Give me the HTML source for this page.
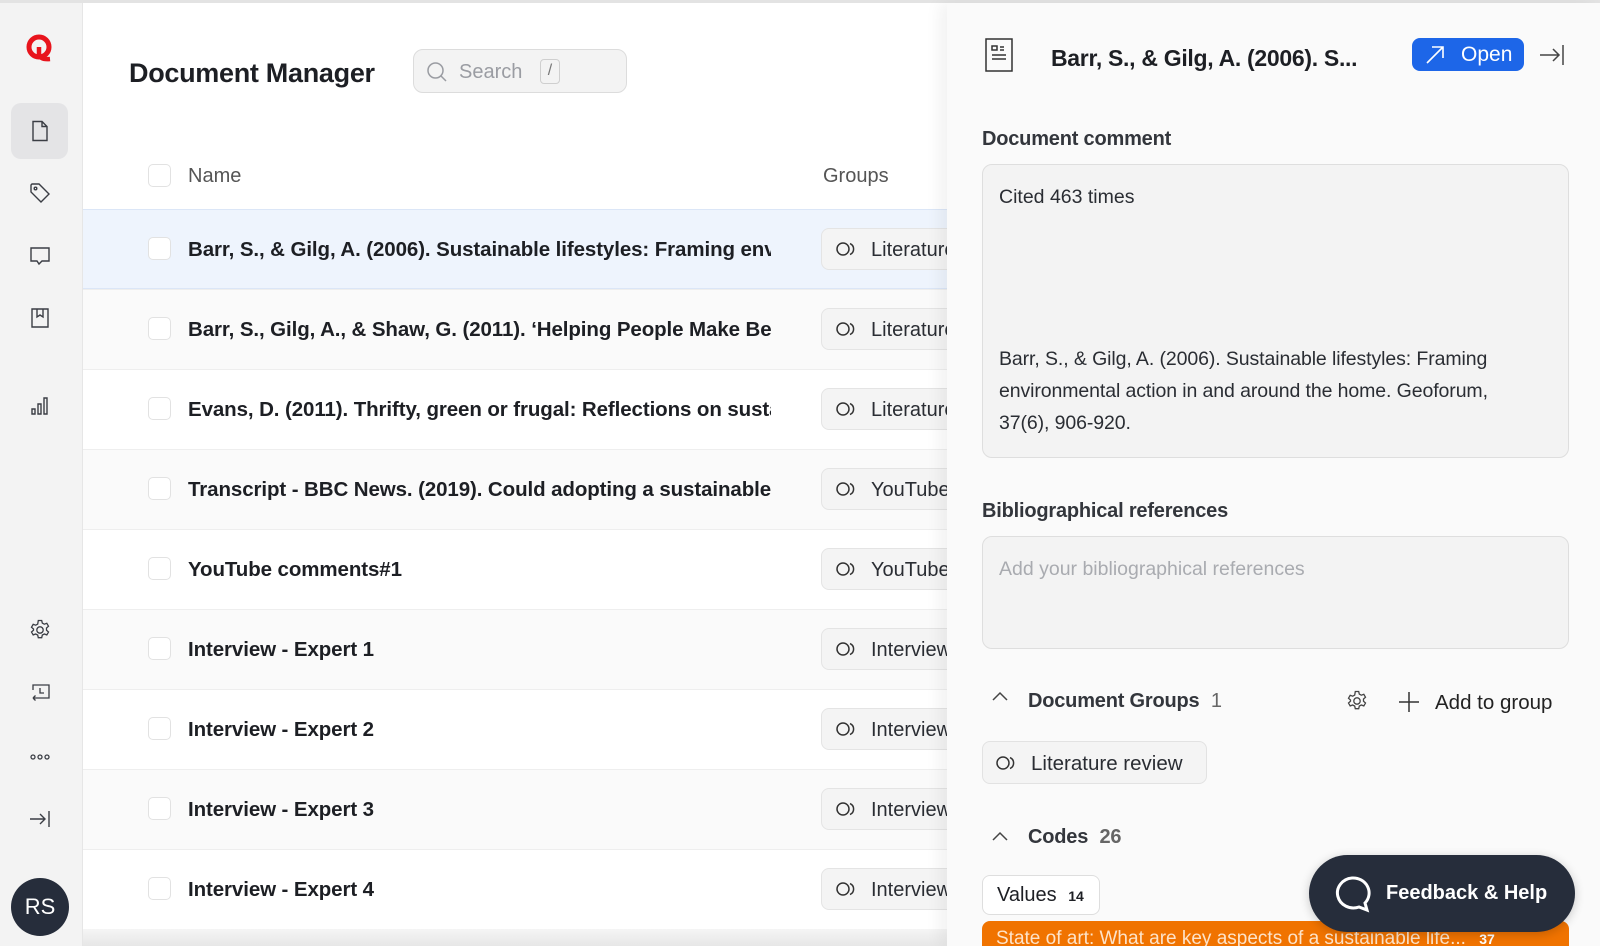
<!DOCTYPE html>
<html style="overflow:hidden;width:1600px;height:946px"><head><meta charset="utf-8"><style>
*{box-sizing:border-box;margin:0;padding:0}
body{width:1600px;height:946px;overflow:hidden;background:#fff;font-family:"Liberation Sans",sans-serif;color:#1d1f24;position:relative}
.abs{position:absolute}
.top{left:0;top:0;width:1600px;height:3px;background:#e3e3e3}
.side{left:0;top:3px;width:83px;height:943px;background:#f3f3f3;border-right:1px solid #e6e6e6}
.ic{position:absolute;left:28px;width:24px;height:24px}
.main{left:83px;top:3px;width:864px;height:943px;background:#fff;overflow:hidden}
.row{position:absolute;left:0;width:864px;height:80px;border-top:1px solid #eee}
.cb{position:absolute;left:65px;width:23px;height:23px;border:1.5px solid #e2e2e2;border-radius:5px;background:#fff}
.rt{position:absolute;left:105px;width:583px;overflow:hidden;white-space:nowrap;font-weight:bold;font-size:20.5px;letter-spacing:-0.1px}
.chip{position:absolute;left:738px;width:200px;height:42px;border:1px solid #e4e4e4;border-radius:8px;background:#f4f4f4;font-size:20px;color:#2a2d33;padding:10px 0 0 49px}
.chip svg{position:absolute;left:14px;top:13px}
.panel{left:947px;top:3px;width:653px;height:943px;background:#fafafa;box-shadow:-8px 0 14px rgba(0,0,0,0.05);overflow:hidden}
.h{font-size:20px;font-weight:bold;color:#33363c;letter-spacing:-0.2px}
.box{position:absolute;background:#f3f3f3;border:1.5px solid #dedede;border-radius:10px}
</style></head><body>
<div class="abs top"></div>
<div class="abs side">
<svg class="abs" style="left:25px;top:31px" width="30" height="32" viewBox="0 0 30 32"><circle cx="14" cy="13" r="10" fill="none" stroke="#e8141c" stroke-width="5"/><path d="M14 13 L14 20 Q15 26 25 25" fill="none" stroke="#e8141c" stroke-width="4.5"/></svg>
<div class="abs" style="left:11px;top:100px;width:57px;height:56px;background:#e4e4e6;border-radius:10px"></div>
<svg class="ic" style="top:116px" viewBox="0 0 24 24" fill="none" stroke="#3a3d44" stroke-width="1.4"><path d="M5 2.5h9l5 5v14H5z M14 2.5v5h5"/></svg>
<svg class="ic" style="top:178px" viewBox="0 0 24 24" fill="none" stroke="#3a3d44" stroke-width="1.4"><path d="M3 4v7l10 10 8-8L11 3H4z"/><circle cx="7.5" cy="7.5" r="1.3"/></svg>
<svg class="ic" style="top:241px" viewBox="0 0 24 24" fill="none" stroke="#3a3d44" stroke-width="1.4"><path d="M3 4h18v13h-7l-3 3-2-3H3z"/></svg>
<svg class="ic" style="top:303px" viewBox="0 0 24 24" fill="none" stroke="#3a3d44" stroke-width="1.4"><path d="M4 3h16v18H4z M9 3v8l3-2 3 2V3"/></svg>
<svg class="ic" style="top:391px" viewBox="0 0 24 24" fill="none" stroke="#3a3d44" stroke-width="1.4"><path d="M4 15h3v5H4z M10 10h3v10h-3z M16 4h3v16h-3z"/></svg>
<svg class="ic" style="top:615px" viewBox="0 0 24 24" fill="none" stroke="#3a3d44" stroke-width="1.3"><circle cx="12" cy="12" r="3.2"/><path d="M10.3 2.5h3.4l.6 2.6 2 1.1 2.5-.9 1.7 2.9-2 1.8v2.2l2 1.8-1.7 2.9-2.5-.9-2 1.1-.6 2.6h-3.4l-.6-2.6-2-1.1-2.5.9-1.7-2.9 2-1.8V11l-2-1.8 1.7-2.9 2.5.9 2-1.1z"/></svg>
<svg class="ic" style="top:678px" viewBox="0 0 24 24" fill="none" stroke="#3a3d44" stroke-width="1.3"><path d="M5 9V4h16v13H5 M5 17l2.5-2.5 M5 17l2.5 2.5 M12 7v5h4"/></svg>
<svg class="ic" style="top:741px" viewBox="0 0 24 24" fill="none" stroke="#3a3d44" stroke-width="1.3"><circle cx="5" cy="13" r="2"/><circle cx="12" cy="13" r="2"/><circle cx="19" cy="13" r="2"/></svg>
<svg class="ic" style="top:804px" viewBox="0 0 24 24" fill="none" stroke="#3a3d44" stroke-width="1.4"><path d="M2 12h15 M12 7l5 5-5 5 M21 4v16"/></svg>
<div class="abs" style="left:11px;top:875px;width:58px;height:58px;border-radius:50%;background:#262d3b;color:#fff;font-size:22px;text-align:center;line-height:58px">RS</div>
</div>
<div class="abs main">
<div class="abs" style="left:46px;top:55px;font-size:27px;font-weight:bold;color:#1d1f24;letter-spacing:-0.3px">Document Manager</div>
<div class="abs" style="left:330px;top:46px;width:214px;height:44px;border:1.5px solid #dcdcdc;border-radius:10px;background:#f3f3f3">
<svg class="abs" style="left:11px;top:10px" width="24" height="24" viewBox="0 0 24 24" fill="none" stroke="#9a9ca2" stroke-width="1.5"><circle cx="10.5" cy="10.5" r="7.5"/><path d="M16 16l5 5"/></svg>
<div class="abs" style="left:45px;top:11px;font-size:20px;color:#9a9ca2">Search</div>
<div class="abs" style="left:126px;top:9px;width:20px;height:25px;border:1.5px solid #cfcfcf;border-radius:4px;font-size:16px;color:#777;text-align:center;line-height:22px">/</div>
</div>
<div class="cb" style="top:161px"></div>
<div class="abs" style="left:105px;top:162px;font-size:20px;color:#555">Name</div>
<div class="abs" style="left:740px;top:162px;font-size:20px;color:#555">Groups</div>
<div class="row" style="top:206px;background:#eef4fd;border-top:1px solid #dbe6f7;border-bottom:1px solid #dbe6f7"><div class="cb" style="top:27px"></div><div class="rt" style="top:28px">Barr, S., &amp; Gilg, A. (2006). Sustainable lifestyles: Framing environmental action</div><div class="chip" style="top:18px"><svg width="22" height="14" viewBox="0 0 22 14" fill="none" stroke="#333" stroke-width="1.5"><circle cx="7" cy="7" r="6"/><path d="M14 1.5a6 6 0 0 1 0 11"/></svg>Literature review</div></div>
<div class="row" style="top:286px;background:#fafafa"><div class="cb" style="top:27px"></div><div class="rt" style="top:28px">Barr, S., Gilg, A., &amp; Shaw, G. (2011). ‘Helping People Make Better Choices’</div><div class="chip" style="top:18px"><svg width="22" height="14" viewBox="0 0 22 14" fill="none" stroke="#333" stroke-width="1.5"><circle cx="7" cy="7" r="6"/><path d="M14 1.5a6 6 0 0 1 0 11"/></svg>Literature review</div></div>
<div class="row" style="top:366px;background:#fff"><div class="cb" style="top:27px"></div><div class="rt" style="top:28px">Evans, D. (2011). Thrifty, green or frugal: Reflections on sustainable consumption</div><div class="chip" style="top:18px"><svg width="22" height="14" viewBox="0 0 22 14" fill="none" stroke="#333" stroke-width="1.5"><circle cx="7" cy="7" r="6"/><path d="M14 1.5a6 6 0 0 1 0 11"/></svg>Literature review</div></div>
<div class="row" style="top:446px;background:#fafafa"><div class="cb" style="top:27px"></div><div class="rt" style="top:28px">Transcript - BBC News. (2019). Could adopting a sustainable lifestyle</div><div class="chip" style="top:18px"><svg width="22" height="14" viewBox="0 0 22 14" fill="none" stroke="#333" stroke-width="1.5"><circle cx="7" cy="7" r="6"/><path d="M14 1.5a6 6 0 0 1 0 11"/></svg>YouTube</div></div>
<div class="row" style="top:526px;background:#fff"><div class="cb" style="top:27px"></div><div class="rt" style="top:28px">YouTube comments#1</div><div class="chip" style="top:18px"><svg width="22" height="14" viewBox="0 0 22 14" fill="none" stroke="#333" stroke-width="1.5"><circle cx="7" cy="7" r="6"/><path d="M14 1.5a6 6 0 0 1 0 11"/></svg>YouTube</div></div>
<div class="row" style="top:606px;background:#fafafa"><div class="cb" style="top:27px"></div><div class="rt" style="top:28px">Interview - Expert 1</div><div class="chip" style="top:18px"><svg width="22" height="14" viewBox="0 0 22 14" fill="none" stroke="#333" stroke-width="1.5"><circle cx="7" cy="7" r="6"/><path d="M14 1.5a6 6 0 0 1 0 11"/></svg>Interviews</div></div>
<div class="row" style="top:686px;background:#fff"><div class="cb" style="top:27px"></div><div class="rt" style="top:28px">Interview - Expert 2</div><div class="chip" style="top:18px"><svg width="22" height="14" viewBox="0 0 22 14" fill="none" stroke="#333" stroke-width="1.5"><circle cx="7" cy="7" r="6"/><path d="M14 1.5a6 6 0 0 1 0 11"/></svg>Interviews</div></div>
<div class="row" style="top:766px;background:#fafafa"><div class="cb" style="top:27px"></div><div class="rt" style="top:28px">Interview - Expert 3</div><div class="chip" style="top:18px"><svg width="22" height="14" viewBox="0 0 22 14" fill="none" stroke="#333" stroke-width="1.5"><circle cx="7" cy="7" r="6"/><path d="M14 1.5a6 6 0 0 1 0 11"/></svg>Interviews</div></div>
<div class="row" style="top:846px;background:#fff"><div class="cb" style="top:27px"></div><div class="rt" style="top:28px">Interview - Expert 4</div><div class="chip" style="top:18px"><svg width="22" height="14" viewBox="0 0 22 14" fill="none" stroke="#333" stroke-width="1.5"><circle cx="7" cy="7" r="6"/><path d="M14 1.5a6 6 0 0 1 0 11"/></svg>Interviews</div></div>
<div class="abs" style="left:0;top:926px;width:864px;height:20px;background:linear-gradient(#f5f5f5,#e4e4e4)"></div>
</div>
<div class="abs panel">
<svg class="abs" style="left:38px;top:35px" width="28" height="34" viewBox="0 0 28 34" fill="none" stroke="#333" stroke-width="1.5"><rect x="1" y="1" width="26" height="32"/><rect x="7" y="8" width="5" height="4"/><path d="M15 9h4 M15 12h4 M7 17h14 M7 21h14"/></svg>
<div class="abs" style="left:104px;top:42px;font-size:23px;font-weight:bold;letter-spacing:-0.3px">Barr, S., &amp; Gilg, A. (2006). S...</div>
<div class="abs" style="left:465px;top:35px;width:112px;height:33px;background:#1d66e8;border-radius:8px;color:#fff;font-size:21px;padding:5px 0 0 49px">Open
<svg class="abs" style="left:12px;top:6px" width="22" height="22" viewBox="0 0 22 22" fill="none" stroke="#fff" stroke-width="1.6"><path d="M3 19L19 3 M8 3h11v11"/></svg></div>
<svg class="abs" style="left:592px;top:40px" width="26" height="24" viewBox="0 0 26 24" fill="none" stroke="#444" stroke-width="1.5"><path d="M1 12h19 M14 6l6 6-6 6 M24 2v20"/></svg>
<div class="abs h" style="left:35px;top:125px">Document comment</div>
<div class="box" style="left:35px;top:161px;width:587px;height:294px">
<div class="abs" style="left:16px;top:21px;font-size:19.5px;color:#2a2d33">Cited 463 times</div>
<div class="abs" style="left:16px;top:178px;font-size:19.5px;color:#2a2d33;line-height:32px;white-space:nowrap;letter-spacing:-0.1px">Barr, S., &amp; Gilg, A. (2006). Sustainable lifestyles: Framing<br>environmental action in and around the home. Geoforum,<br>37(6), 906-920.</div>
</div>
<div class="abs h" style="left:35px;top:497px">Bibliographical references</div>
<div class="box" style="left:35px;top:533px;width:587px;height:113px">
<div class="abs" style="left:16px;top:21px;font-size:19.5px;color:#a9abb0">Add your bibliographical references</div>
</div>
<svg class="abs" style="left:44px;top:687px" width="18" height="12" viewBox="0 0 18 12" fill="none" stroke="#444" stroke-width="1.5"><path d="M2 10l7-7 7 7"/></svg>
<div class="abs h" style="left:81px;top:687px">Document Groups <span style="font-weight:normal;color:#666;margin-left:6px">1</span></div>
<svg class="abs" style="left:398px;top:686px" width="24" height="24" viewBox="0 0 24 24" fill="none" stroke="#444" stroke-width="1.3"><circle cx="12" cy="12" r="3.2"/><path d="M10.3 2.5h3.4l.6 2.6 2 1.1 2.5-.9 1.7 2.9-2 1.8v2.2l2 1.8-1.7 2.9-2.5-.9-2 1.1-.6 2.6h-3.4l-.6-2.6-2-1.1-2.5.9-1.7-2.9 2-1.8V11l-2-1.8 1.7-2.9 2.5.9 2-1.1z"/></svg>
<svg class="abs" style="left:450px;top:687px" width="24" height="24" viewBox="0 0 24 24" fill="none" stroke="#333" stroke-width="1.5"><path d="M12 2v20 M2 12h20"/></svg>
<div class="abs" style="left:488px;top:688px;font-size:20.5px;color:#222">Add to group</div>
<div class="abs" style="left:35px;top:738px;width:225px;height:43px;border:1.5px solid #e2e2e2;border-radius:8px;background:#f4f4f4;font-size:20.5px;color:#2a2d33;padding:10px 0 0 48px">
<svg class="abs" style="left:13px;top:14px" width="22" height="14" viewBox="0 0 22 14" fill="none" stroke="#333" stroke-width="1.5"><circle cx="7" cy="7" r="6"/><path d="M14 1.5a6 6 0 0 1 0 11"/></svg>Literature review</div>
<svg class="abs" style="left:44px;top:827px" width="18" height="12" viewBox="0 0 18 12" fill="none" stroke="#444" stroke-width="1.5"><path d="M2 10l7-7 7 7"/></svg>
<div class="abs h" style="left:81px;top:823px">Codes <span style="color:#666;margin-left:6px">26</span></div>
<div class="abs" style="left:35px;top:872px;width:118px;height:40px;border:1.5px solid #dedede;border-radius:8px;background:#fff;font-size:20px;color:#1d1f24;padding:8px 0 0 14px">Values <span style="font-size:14px;font-weight:bold;margin-left:6px">14</span></div>
<div class="abs" style="left:35px;top:918px;width:587px;height:40px;background:#f07300;border-radius:8px;color:#fde3c9;font-size:19px;padding:7px 0 0 14px;white-space:nowrap">State of art: What are key aspects of a sustainable life... <span style="font-size:14px;font-weight:bold;margin-left:8px;color:#fff">37</span></div>
<div class="abs" style="left:362px;top:852px;width:266px;height:77px;background:#262d3b;border-radius:39px;box-shadow:0 2px 10px rgba(0,0,0,0.2)">
<svg class="abs" style="left:24px;top:20px" width="38" height="38" viewBox="0 0 38 38" fill="none" stroke="#fff" stroke-width="3"><path d="M19 3a16 15 0 1 0 7 29l8 3-2-7A16 15 0 0 0 19 3z"/></svg>
<div class="abs" style="left:77px;top:27px;color:#fff;font-size:20px;font-weight:bold">Feedback &amp; Help</div></div>
</div>
</body></html>
